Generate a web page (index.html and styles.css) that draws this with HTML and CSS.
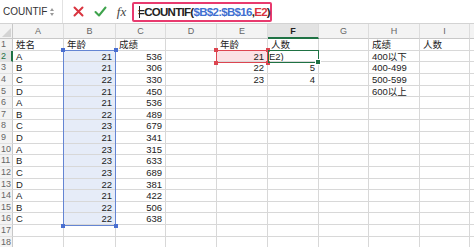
FILE: index.html
```html
<!DOCTYPE html>
<html lang="zh">
<head>
    <meta charset="UTF-8">
    <title>COUNTIF</title>
    <link rel="stylesheet" href="styles.css">
</head>
<body>
    <div class="toolbar">
        <div class="name-box">COUNTIF</div>
        <div class="stepper"><span class="up"></span><span class="down"></span></div>
        <div class="divider"></div>
        <div class="tool cancel">
            <svg width="11" height="11" viewBox="0 0 11 11"><path d="M1.5 1.5 L9.5 9.5 M9.5 1.5 L1.5 9.5" stroke="#d9343f" stroke-width="2" stroke-linecap="round"/></svg>
        </div>
        <div class="tool ok">
            <svg width="13" height="11" viewBox="0 0 13 11"><path d="M1.5 6 L5 9.5 L11.5 1.5" stroke="#3ea34c" stroke-width="2" fill="none" stroke-linecap="round" stroke-linejoin="round"/></svg>
        </div>
        <div class="tool fx">fx</div>
        <div class="formula"><span class="caret"></span>=COUNTIF(<span class="ref-b">$B$2:$B$16</span>,<span class="ref-e">E2</span>)</div>
    </div>

    <div class="sheet">
        <div class="corner"><span class="tri"></span></div>
        <div class="col-head">A</div>
        <div class="col-head">B</div>
        <div class="col-head">C</div>
        <div class="col-head">D</div>
        <div class="col-head">E</div>
        <div class="col-head active">F</div>
        <div class="col-head">G</div>
        <div class="col-head">H</div>
        <div class="col-head">I</div>
        <div class="col-head"></div>

        <div class="row-head">1</div>
        <div class="cell">姓名</div><div class="cell">年龄</div><div class="cell">成绩</div><div class="cell"></div>
        <div class="cell">年龄</div><div class="cell">人数</div><div class="cell"></div><div class="cell">成绩</div><div class="cell">人数</div><div class="cell"></div>

        <div class="row-head active">2</div>
        <div class="cell">A</div><div class="cell num blue">21</div><div class="cell num">536</div><div class="cell"></div>
        <div class="cell num pink">21</div><div class="cell edit">E2)</div><div class="cell"></div><div class="cell">400以下</div><div class="cell"></div><div class="cell"></div>

        <div class="row-head">3</div>
        <div class="cell">B</div><div class="cell num blue">21</div><div class="cell num">306</div><div class="cell"></div>
        <div class="cell num">22</div><div class="cell num">5</div><div class="cell"></div><div class="cell">400-499</div><div class="cell"></div><div class="cell"></div>

        <div class="row-head">4</div>
        <div class="cell">C</div><div class="cell num blue">22</div><div class="cell num">330</div><div class="cell"></div>
        <div class="cell num">23</div><div class="cell num">4</div><div class="cell"></div><div class="cell">500-599</div><div class="cell"></div><div class="cell"></div>

        <div class="row-head">5</div>
        <div class="cell">D</div><div class="cell num blue">21</div><div class="cell num">450</div><div class="cell"></div>
        <div class="cell"></div><div class="cell"></div><div class="cell"></div><div class="cell">600以上</div><div class="cell"></div><div class="cell"></div>

        <div class="row-head">6</div>
        <div class="cell">A</div><div class="cell num blue">21</div><div class="cell num">536</div><div class="cell"></div>
        <div class="cell"></div><div class="cell"></div><div class="cell"></div><div class="cell"></div><div class="cell"></div><div class="cell"></div>

        <div class="row-head">7</div>
        <div class="cell">B</div><div class="cell num blue">22</div><div class="cell num">489</div><div class="cell"></div>
        <div class="cell"></div><div class="cell"></div><div class="cell"></div><div class="cell"></div><div class="cell"></div><div class="cell"></div>

        <div class="row-head">8</div>
        <div class="cell">C</div><div class="cell num blue">23</div><div class="cell num">679</div><div class="cell"></div>
        <div class="cell"></div><div class="cell"></div><div class="cell"></div><div class="cell"></div><div class="cell"></div><div class="cell"></div>

        <div class="row-head">9</div>
        <div class="cell">D</div><div class="cell num blue">21</div><div class="cell num">341</div><div class="cell"></div>
        <div class="cell"></div><div class="cell"></div><div class="cell"></div><div class="cell"></div><div class="cell"></div><div class="cell"></div>

        <div class="row-head">10</div>
        <div class="cell">A</div><div class="cell num blue">23</div><div class="cell num">315</div><div class="cell"></div>
        <div class="cell"></div><div class="cell"></div><div class="cell"></div><div class="cell"></div><div class="cell"></div><div class="cell"></div>

        <div class="row-head">11</div>
        <div class="cell">B</div><div class="cell num blue">23</div><div class="cell num">633</div><div class="cell"></div>
        <div class="cell"></div><div class="cell"></div><div class="cell"></div><div class="cell"></div><div class="cell"></div><div class="cell"></div>

        <div class="row-head">12</div>
        <div class="cell">C</div><div class="cell num blue">23</div><div class="cell num">689</div><div class="cell"></div>
        <div class="cell"></div><div class="cell"></div><div class="cell"></div><div class="cell"></div><div class="cell"></div><div class="cell"></div>

        <div class="row-head">13</div>
        <div class="cell">D</div><div class="cell num blue">22</div><div class="cell num">381</div><div class="cell"></div>
        <div class="cell"></div><div class="cell"></div><div class="cell"></div><div class="cell"></div><div class="cell"></div><div class="cell"></div>

        <div class="row-head">14</div>
        <div class="cell">A</div><div class="cell num blue">21</div><div class="cell num">422</div><div class="cell"></div>
        <div class="cell"></div><div class="cell"></div><div class="cell"></div><div class="cell"></div><div class="cell"></div><div class="cell"></div>

        <div class="row-head">15</div>
        <div class="cell">B</div><div class="cell num blue">22</div><div class="cell num">506</div><div class="cell"></div>
        <div class="cell"></div><div class="cell"></div><div class="cell"></div><div class="cell"></div><div class="cell"></div><div class="cell"></div>

        <div class="row-head">16</div>
        <div class="cell">C</div><div class="cell num blue">22</div><div class="cell num">638</div><div class="cell"></div>
        <div class="cell"></div><div class="cell"></div><div class="cell"></div><div class="cell"></div><div class="cell"></div><div class="cell"></div>

        <div class="row-head">17</div>
        <div class="cell"></div><div class="cell"></div><div class="cell"></div><div class="cell"></div>
        <div class="cell"></div><div class="cell"></div><div class="cell"></div><div class="cell"></div><div class="cell"></div><div class="cell"></div>

        <div class="row-head">18</div>
        <div class="cell"></div><div class="cell"></div><div class="cell"></div><div class="cell"></div>
        <div class="cell"></div><div class="cell"></div><div class="cell"></div><div class="cell"></div><div class="cell"></div><div class="cell"></div>

        <!-- range highlights drawn over the grid -->
        <div class="range range-b">
            <span class="h tl"></span><span class="h tr"></span><span class="h bl"></span><span class="h br"></span>
        </div>
        <div class="range range-e">
            <span class="h tl"></span><span class="h tr"></span><span class="h bl"></span><span class="h br"></span>
        </div>
        <div class="active-cell"><span class="fill-handle"></span></div>
    </div>
</body>
</html>
```

FILE: styles.css
```css
body {
    margin: 0;
    font-family: "Liberation Sans", Arial, "Noto Sans CJK SC", sans-serif;
    background-color: #fff;
    color: #222;
    overflow: hidden;
}

.toolbar {
    display: flex;
    align-items: center;
    height: 23px;
    border-bottom: 1px solid #d3d3d3;
    background-color: #fff;
}

.name-box {
    width: 47px;
    padding-left: 3px;
    font-size: 10px;
    color: #333;
}

.stepper {
    display: flex;
    flex-direction: column;
    gap: 2px;
    width: 12px;
}

.stepper span {
    width: 0;
    height: 0;
    border-left: 2.5px solid transparent;
    border-right: 2.5px solid transparent;
}

.stepper .up {
    border-bottom: 3px solid #999;
}

.stepper .down {
    border-top: 3px solid #999;
}

.divider {
    width: 1px;
    height: 23px;
    background-color: #e2e2e2;
}

.tool {
    display: flex;
    justify-content: center;
    width: 22px;
}

.cancel {
    margin-left: 4px;
}

.fx {
    font-family: "Liberation Serif", serif;
    font-style: italic;
    font-size: 13px;
    color: #444;
    width: 21px;
}

.formula {
    display: flex;
    align-items: center;
    width: 131px;
    height: 16px;
    padding-left: 5px;
    border: 2px solid #e83a6e;
    border-radius: 2px;
    font-size: 11.5px;
    font-weight: bold;
    letter-spacing: -0.7px;
    color: #222;
    white-space: nowrap;
}

.caret {
    width: 1px;
    height: 12px;
    background-color: #222;
    margin-right: -1px;
}

.ref-b {
    color: #3f6fd0;
}

.ref-e {
    color: #d8333f;
}

/* sheet */

.sheet {
    position: relative;
    display: grid;
    grid-template-columns: 13px 51px 52px 50px 51px 51px 51px 50px 51px 50px 1fr;
    grid-template-rows: 15px;
    grid-auto-rows: 11.625px;
    font-size: 9.5px;
}

.corner,
.col-head,
.row-head,
.cell {
    box-sizing: border-box;
    border-right: 1px solid #d8d8d8;
    border-bottom: 1px solid #d8d8d8;
    overflow: hidden;
    white-space: nowrap;
}

.corner {
    position: relative;
    background-color: #f3f3f3;
    border-right-color: #c8c8c8;
    border-bottom-color: #c8c8c8;
}

.corner .tri {
    position: absolute;
    right: 1px;
    bottom: 1px;
    width: 0;
    height: 0;
    border-left: 9px solid transparent;
    border-bottom: 9px solid #d4d4d4;
}

.col-head {
    background-color: #f3f3f3;
    border-right-color: #dcdcdc;
    border-bottom-color: #c8c8c8;
    text-align: center;
    color: #666;
    font-size: 9px;
    line-height: 15px;
}

.col-head.active {
    background-color: #e3e3e3;
    border-bottom: 2px solid #1f7244;
    color: #222;
    font-weight: bold;
}

.row-head {
    background-color: #f3f3f3;
    border-right-color: #c8c8c8;
    border-bottom-color: #e0e0e0;
    color: #666;
    font-size: 9px;
    line-height: 11px;
    padding-left: 1px;
}

.row-head.active {
    background-color: #e3e3e3;
    border-right: 2px solid #1f7244;
    color: #1f7244;
}

.cell {
    line-height: 11px;
    padding: 0 3px;
}

.num {
    text-align: right;
}

.blue {
    background-color: #e6ecf8;
}

.pink {
    background-color: #fbe1e4;
}

.edit {
    padding-left: 1px;
}

/* overlays on top of the grid */

.range,
.active-cell {
    position: absolute;
    box-sizing: border-box;
}

.range-b {
    grid-column: 3 / 4;
    grid-row: 3 / 18;
    top: -1px;
    left: -1px;
    right: 0;
    bottom: -1px;
    border: 1.5px solid #6485d3;
}

.range-e {
    grid-column: 6 / 7;
    grid-row: 3 / 4;
    top: -1px;
    left: -1px;
    right: 0;
    bottom: -1px;
    border: 1.5px solid #dc4550;
}

.h {
    position: absolute;
    width: 4px;
    height: 4px;
}

.range-b .h {
    background-color: #4a6fd0;
}

.range-e .h {
    background-color: #dc4550;
}

.tl { top: -3px; left: -3px; }
.tr { top: -3px; right: -3px; }
.bl { bottom: -3px; left: -3px; }
.br { bottom: -3px; right: -3px; }

.active-cell {
    grid-column: 7 / 8;
    grid-row: 3 / 4;
    top: -1px;
    left: 0;
    right: 0;
    bottom: -1px;
    border: 1.5px solid #1f7244;
}

.fill-handle {
    position: absolute;
    right: -3px;
    bottom: -3px;
    width: 4px;
    height: 4px;
    background-color: #1f7244;
    border: 1px solid #fff;
}
```
